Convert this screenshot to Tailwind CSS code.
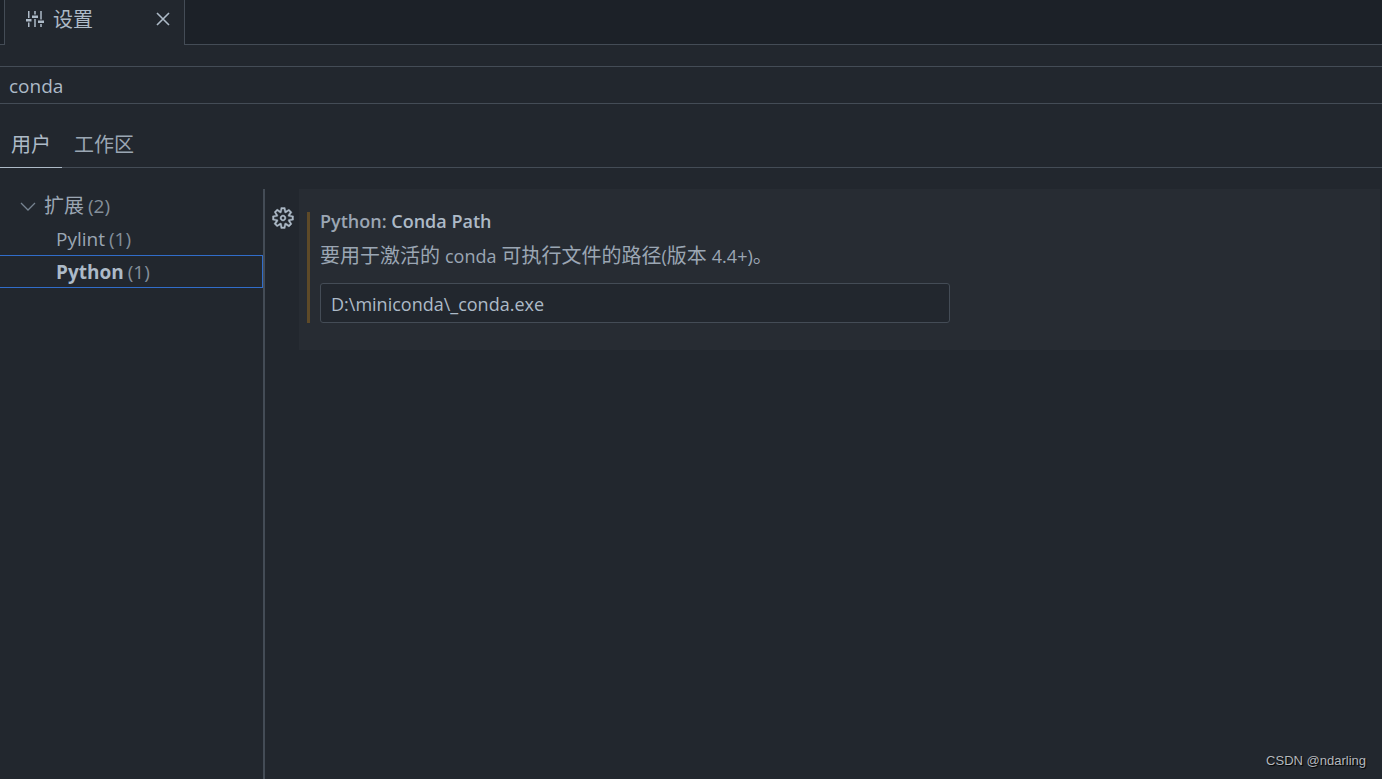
<!DOCTYPE html>
<html lang="zh-CN">
<head>
<meta charset="utf-8">
<meta name="viewport" content="width=device-width, initial-scale=1">
<title>设置</title>
<script src="https://cdn.jsdelivr.net/npm/@tailwindcss/browser@4"></script>
</head>
<body class="relative flex h-screen flex-col overflow-hidden bg-[#22272e] font-['Open_Sans','Noto_Sans_CJK_SC',sans-serif] text-[19px] leading-[26px] text-[#9ba6b3]">
  <header class="flex h-[45px] shrink-0">
    <div class="w-1 border-b border-[#444c56] bg-[#1c2128]"></div>
    <div class="flex w-[181px] items-center border-x border-[#444c56] pr-3 pb-[5px] pl-5 text-[#adbac7]">
      <svg class="size-5 shrink-0" viewBox="0 0 20 20" fill="currentColor" aria-hidden="true">
        <path d="M3 1h1.500v7H3zM3 12.500h1.500V17H3zM9.250 1h1.500v3.500h-1.500zM9.250 9h1.500v8h-1.500zM15.250 1h1.500v8.500h-1.500zM15.250 14h1.500v3h-1.500zM1 9h5.500v2.500H1zM7 5.500h6V8H7zM13 10.500h6V13h-6z"/>
      </svg>
      <span class="ml-2 text-[20px]">设置</span>
      <button type="button" aria-label="关闭" class="ml-auto">
        <svg class="block size-[18px]" viewBox="0 0 18 18" fill="none" stroke="currentColor" stroke-width="1.600" aria-hidden="true"><path d="M3 2l12 12M15 2L3 14"/></svg>
      </button>
    </div>
    <div class="flex-1 border-b border-[#444c56] bg-[#1c2128]"></div>
  </header>

  <input type="text" aria-label="搜索设置" value="conda" class="mt-[21px] h-[38px] w-full shrink-0 border-y border-[#444c56] bg-[#22272e] px-[9px] pt-[2px] text-[19px] text-[#adbac7] outline-none">

  <nav class="mt-4 flex h-12 shrink-0 border-b border-[#444c56] text-[20px]">
    <button type="button" class="-mb-px h-12 w-[62px] border-b border-[#adbac7] pt-[2px] text-[#adbac7]">用户</button>
    <button type="button" class="h-12 px-3 pt-px">工作区</button>
  </nav>

  <main class="mt-[21px] flex min-h-0 flex-1">
    <aside class="w-[265px] shrink-0 border-r-2 border-[#444c56]">
      <button type="button" class="flex h-[33px] w-full items-center pl-5">
        <svg class="h-4 w-4" viewBox="0 0 16 16" fill="none" stroke="#768390" stroke-width="1.300" aria-hidden="true"><path d="M1 5l7 7 7-7"/></svg>
        <span class="ml-2 text-[20px]">扩展</span><span class="ml-1 text-[#848f9b]">(2)</span>
      </button>
      <button type="button" class="flex h-[33px] w-full items-center pl-14">Pylint<span class="ml-1 text-[#848f9b]">(1)</span></button>
      <button type="button" class="flex h-[33px] w-full items-center border border-l-0 border-[#316dca] pl-14"><span class="font-bold text-[#adbac7]">Python</span><span class="ml-1 text-[#848f9b]">(1)</span></button>
    </aside>
    <button type="button" aria-label="更多操作" class="mt-[17px] ml-[6px] size-6 shrink-0 text-[#adbac7]">
      <svg class="block size-6" viewBox="0 0 16 16" fill="currentColor" stroke="currentColor" stroke-width="0.250" aria-hidden="true"><path fill-rule="evenodd" clip-rule="evenodd" d="M9.1 4.4L8.6 2H7.4l-.5 2.4-.7.3-2-1.3-.9.8 1.3 2-.2.7-2.4.5v1.2l2.4.5.3.8-1.3 2 .8.8 2-1.3.8.3.4 2.3h1.2l.5-2.4.8-.3 2 1.3.8-.8-1.3-2 .3-.8 2.3-.4V7.4l-2.400-.5-.3-.8 1.300-2-.8-.8-2 1.300-.7-.2zM9.400 1l.5 2.400L12 2.100l2 2-1.400 2.100 2.400.4v2.800l-2.400.5L14 12l-2 2-2.100-1.400-.5 2.400H6.600l-.5-2.400L4 13.900l-2-2 1.400-2.100L1 9.400V6.600l2.400-.5L2.100 4l2-2 2.100 1.400.4-2.400h2.800zm.6 7c0 1.100-.9 2-2 2s-2-.9-2-2 .9-2 2-2 2 .9 2 2zM8 9c.6 0 1-.4 1-1s-.4-1-1-1-1 .4-1 1 .4 1 1 1z"/></svg>
    </button>
    <section class="mr-[2px] ml-1 flex-1 self-start bg-[#272c33] pt-[23px] pr-2 pb-[27px] pl-2 text-[18px]">
      <div class="border-l-3 border-[#5e4a28] pl-[10px]">
        <h2 class="h-[28px] leading-[18px] font-semibold">Python: <span class="text-[#adbac7]">Conda Path</span></h2>
        <label for="conda-path" class="flex h-[43px] items-start leading-[32px]"><span class="text-[20px]">要用于激活的</span><span class="mx-[5px]">conda</span><span class="text-[20px]">可执行文件的路径</span>(<span class="text-[20px]">版本</span><span class="ml-[5px]">4.4+)</span><span class="text-[20px]">。</span></label>
        <input id="conda-path" type="text" value="D:\miniconda\_conda.exe" class="block h-10 w-full max-w-[630px] rounded-[3px] border border-[#444c56] bg-[#22272e] px-[10px] pt-px text-[18px] text-[#adbac7] outline-none">
      </div>
    </section>
  </main>

  <div class="absolute right-4 bottom-2 font-['Liberation_Sans',sans-serif] text-[13px] leading-5 text-[#b4b8bd] [text-shadow:1px_1px_1px_#000]">CSDN @ndarling</div>
</body>
</html>
